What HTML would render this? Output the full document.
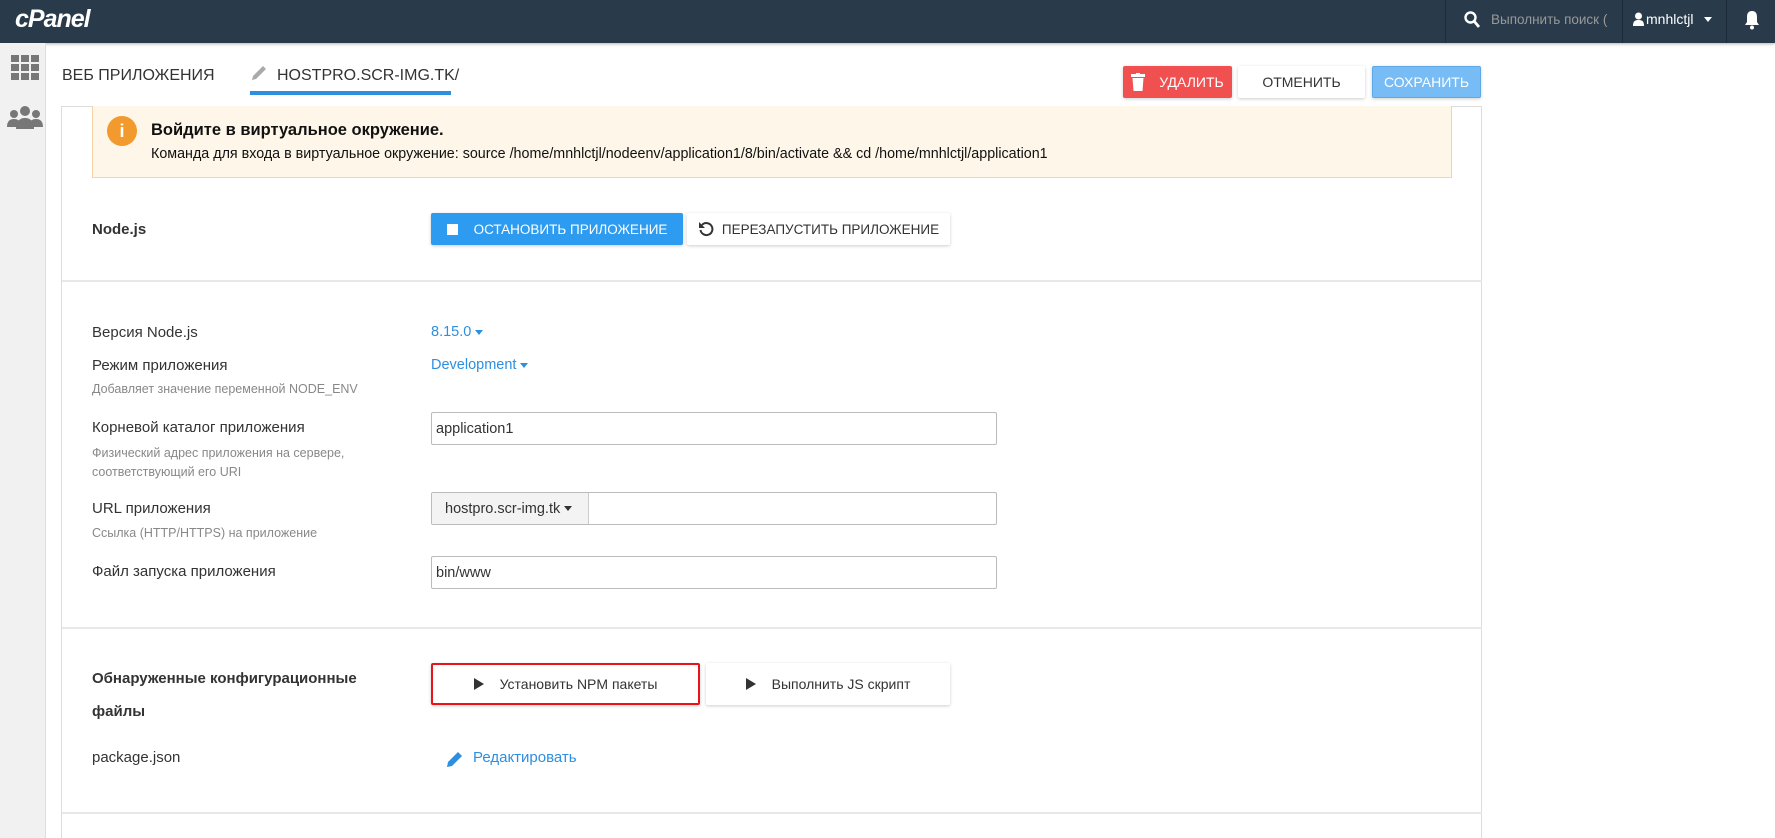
<!DOCTYPE html>
<html><head><meta charset="utf-8"><style>
*{box-sizing:border-box;margin:0;padding:0}
body{width:1775px;height:838px;overflow:hidden;background:#fff;font-family:"Liberation Sans","DejaVu Sans",sans-serif;color:#333;position:relative}
.a{position:absolute;white-space:nowrap}
.hdr{left:0;top:0;width:1775px;height:43px;background:#293a4a;box-shadow:0 1px 3px rgba(0,0,0,.3)}
.side{left:0;top:43px;width:46px;height:795px;background:#f1f1f1;border-right:1px solid #ddd}
.btn{position:absolute;display:flex;align-items:center;justify-content:center;font-size:14px;border-radius:2px;box-shadow:0 1px 3px rgba(0,0,0,.2)}
.lbl{font-size:15px;color:#333}
.help{font-size:12.5px;color:#888}
.inp{position:absolute;border:1px solid #bbb;border-radius:2px;background:#fff;font-size:14.5px;padding:0 4px;display:flex;align-items:center}
.sep{position:absolute;left:62px;width:1420px;height:2px;background:#e8e8e8}
</style></head><body>
<div class="a hdr"></div>
<div class="a" style="left:15px;top:5px;color:#fff;font-size:25px;font-style:italic;font-weight:bold;letter-spacing:-1px">cPanel</div>
<div class="a" style="left:1445px;top:0;width:1px;height:43px;background:#1e2c39"></div>
<div class="a" style="left:1622px;top:0;width:1px;height:43px;background:#1e2c39"></div>
<div class="a" style="left:1726px;top:0;width:1px;height:43px;background:#1e2c39"></div>
<svg class="a" style="left:1464px;top:11px" width="16" height="18" viewBox="0 0 16 18"><circle cx="6.5" cy="6.5" r="5" fill="none" stroke="#fff" stroke-width="2.4"/><path d="M10 10l5 6" stroke="#fff" stroke-width="2.8"/></svg>
<div class="a" style="left:1491px;top:12px;color:#999;font-size:13.5px">Выполнить поиск (</div>
<svg class="a" style="left:1633px;top:12px" width="11" height="14" viewBox="0 0 11 14"><circle cx="5.5" cy="4" r="3.5" fill="#fff"/><path d="M0 14c0-5 2-6 5.5-6s5.5 1 5.5 6z" fill="#fff"/></svg>
<div class="a" style="left:1646px;top:11px;color:#fff;font-size:14px">mnhlctjl</div>
<div class="a" style="left:1704px;top:17px;border:4px solid transparent;border-top:5px solid #fff"></div>
<svg class="a" style="left:1744px;top:10px" width="16" height="20" viewBox="0 0 16 20"><path d="M8 1c-4 0-5 3-5 6v5l-2 3h14l-2-3V7c0-3-1-6-5-6z" fill="#fff"/><circle cx="8" cy="17.5" r="2" fill="#fff"/></svg>
<div class="a side"></div>
<svg class="a" style="left:11px;top:55px" width="28" height="25" viewBox="0 0 28 25"><g fill="#777"><rect x="0" y="0" width="8" height="7"/><rect x="10" y="0" width="8" height="7"/><rect x="20" y="0" width="8" height="7"/><rect x="0" y="9" width="8" height="7"/><rect x="10" y="9" width="8" height="7"/><rect x="20" y="9" width="8" height="7"/><rect x="0" y="18" width="8" height="7"/><rect x="10" y="18" width="8" height="7"/><rect x="20" y="18" width="8" height="7"/></g></svg>
<svg class="a" style="left:7px;top:105px" width="36" height="24" viewBox="0 0 36 24"><g fill="#777"><circle cx="7" cy="9" r="4"/><circle cx="29" cy="9" r="4"/><circle cx="18" cy="6" r="5"/><path d="M0 22c0-6 3-8 7-8s7 2 7 8zM22 22c0-6 3-8 7-8s7 2 7 8z"/><path d="M9 24c0-8 4-11 9-11s9 3 9 11z"/></g></svg>
<div class="a" style="left:62px;top:67px;font-size:16px;color:#333">ВЕБ ПРИЛОЖЕНИЯ</div>
<svg class="a" style="left:250px;top:64px" width="18" height="18" viewBox="0 0 18 18"><path d="M2 16l1-4L13 2l3 3L6 15z" fill="#aaa"/></svg>
<div class="a" style="left:277px;top:67px;font-size:16px;color:#333">HOSTPRO.SCR-IMG.TK/</div>
<div class="a" style="left:250px;top:91px;width:201px;height:4px;background:#2d8fe0"></div>
<div class="btn" style="left:1123px;top:66px;width:109px;height:32px;background:#f05050;color:#fff"><svg width="14" height="18" viewBox="0 0 14 18" style="margin-right:14px"><rect x="0" y="1" width="14" height="3" fill="#fff"/><rect x="5" y="0" width="4" height="2" fill="#fff"/><path d="M1.5 5h11l-1 13h-9z" fill="#fff"/></svg>УДАЛИТЬ</div>
<div class="btn" style="left:1238px;top:66px;width:127px;height:32px;background:#fff;color:#333">ОТМЕНИТЬ</div>
<div class="btn" style="left:1372px;top:66px;width:109px;height:32px;background:#78bcf5;color:#fff;border:1px solid #5fa8e8">СОХРАНИТЬ</div>
<div class="a" style="left:61px;top:106px;width:1421px;height:732px;border:1px solid #ddd;border-bottom:none"></div>
<div class="a" style="left:92px;top:106px;width:1360px;height:72px;background:#fef6e9;border:1px solid #f5d3a4;border-top:none"></div>
<div class="a" style="left:107px;top:116px;width:30px;height:30px;border-radius:50%;background:#f29a2e;color:#fff;font-weight:bold;font-size:18px;text-align:center;line-height:30px">i</div>
<div class="a" style="left:151px;top:121px;font-size:16.5px;font-weight:bold;color:#111">Войдите в виртуальное окружение.</div>
<div class="a" style="left:151px;top:146px;font-size:14.3px;color:#111">Команда для входа в виртуальное окружение: source /home/mnhlctjl/nodeenv/application1/8/bin/activate &amp;&amp; cd /home/mnhlctjl/application1</div>
<div class="a lbl" style="left:92px;top:221px;font-weight:bold">Node.js</div>
<div class="btn" style="left:431px;top:213px;width:252px;height:32px;background:#2d9bf0;color:#fff;font-size:13.5px"><span style="display:inline-block;width:11px;height:11px;background:#fff;margin-right:16px"></span>ОСТАНОВИТЬ ПРИЛОЖЕНИЕ</div>
<div class="btn" style="left:687px;top:213px;width:263px;height:32px;background:#fff;color:#333;font-size:13.5px"><svg width="16" height="16" viewBox="0 0 16 16" style="margin-right:8px"><path d="M4 4a6 6 0 1 1-1.5 5" fill="none" stroke="#333" stroke-width="2"/><path d="M1 1v6h6z" fill="#333"/></svg>ПЕРЕЗАПУСТИТЬ ПРИЛОЖЕНИЕ</div>
<div class="sep" style="top:280px"></div>
<div class="a lbl" style="left:92px;top:324px">Версия Node.js</div>
<div class="a" style="left:431px;top:324px;font-size:14.5px;color:#2d8fe0">8.15.0 <span style="display:inline-block;border:4px solid transparent;border-top:5px solid #2d8fe0;vertical-align:middle;margin-top:4px"></span></div>
<div class="a lbl" style="left:92px;top:357px">Режим приложения</div>
<div class="a" style="left:431px;top:357px;font-size:14.5px;color:#2d8fe0">Development <span style="display:inline-block;border:4px solid transparent;border-top:5px solid #2d8fe0;vertical-align:middle;margin-top:4px"></span></div>
<div class="a help" style="left:92px;top:382px">Добавляет значение переменной NODE_ENV</div>
<div class="a lbl" style="left:92px;top:419px">Корневой каталог приложения</div>
<div class="inp" style="left:431px;top:412px;width:566px;height:33px">application1</div>
<div class="a help" style="left:92px;top:446px">Физический адрес приложения на сервере,</div>
<div class="a help" style="left:92px;top:465px">соответствующий его URI</div>
<div class="a lbl" style="left:92px;top:500px">URL приложения</div>
<div class="inp" style="left:431px;top:492px;width:566px;height:33px;padding:0"><div style="width:157px;height:100%;background:#f3f3f3;border-right:1px solid #ccc;display:flex;align-items:center;padding-left:13px">hostpro.scr-img.tk <span style="display:inline-block;border:4px solid transparent;border-top:5px solid #333;margin:4px 0 0 4px"></span></div></div>
<div class="a help" style="left:92px;top:526px">Ссылка (HTTP/HTTPS) на приложение</div>
<div class="a lbl" style="left:92px;top:563px">Файл запуска приложения</div>
<div class="inp" style="left:431px;top:556px;width:566px;height:33px">bin/www</div>
<div class="sep" style="top:627px"></div>
<div class="a lbl" style="left:92px;top:670px;font-weight:bold">Обнаруженные конфигурационные</div>
<div class="a lbl" style="left:92px;top:703px;font-weight:bold">файлы</div>
<div class="btn" style="left:431px;top:663px;width:269px;height:42px;background:#fff;border:2px solid #e8141a;color:#333"><span style="display:inline-block;border:6px solid transparent;border-left:10px solid #333;border-right:0;margin-right:16px"></span>Установить NPM пакеты</div>
<div class="btn" style="left:706px;top:663px;width:244px;height:42px;background:#fff;color:#333"><span style="display:inline-block;border:6px solid transparent;border-left:10px solid #333;border-right:0;margin-right:16px"></span>Выполнить JS скрипт</div>
<div class="a lbl" style="left:92px;top:749px">package.json</div>
<svg class="a" style="left:446px;top:750px" width="18" height="18" viewBox="0 0 18 18"><path d="M1 17l1-5L12 2l4 4L6 16z" fill="#2d8fe0"/></svg>
<div class="a" style="left:473px;top:749px;font-size:15px;color:#2d8fe0">Редактировать</div>
<div class="sep" style="top:812px"></div>
</body></html>
